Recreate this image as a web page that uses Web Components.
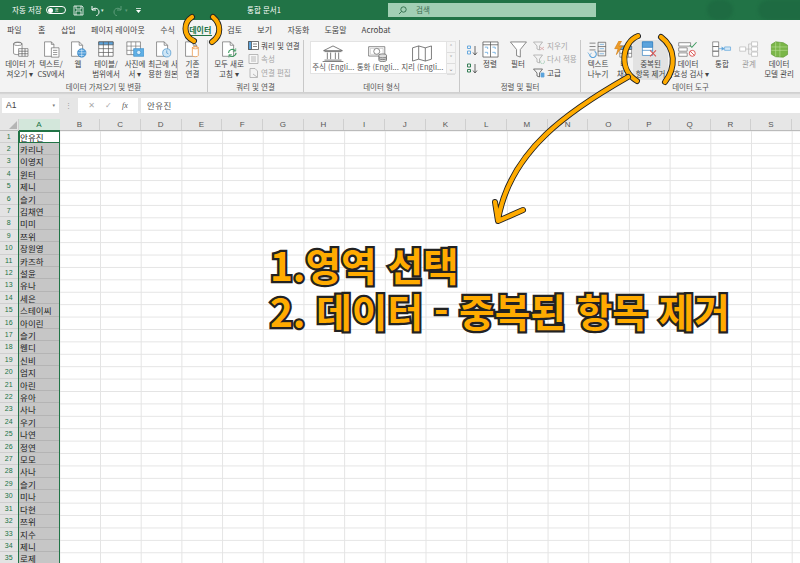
<!DOCTYPE html>
<html lang="ko"><head><meta charset="utf-8"><title>통합 문서1</title>
<style>
html,body{margin:0;padding:0;width:800px;height:563px;overflow:hidden;background:#fff;font-family:"Noto Sans CJK KR","Noto Sans",sans-serif;color:#444}
x-app{display:block;position:relative;width:800px;height:563px;overflow:hidden}
</style></head><body>
<x-app>
  <x-titlebar></x-titlebar>
  <x-tabs></x-tabs>
  <x-ribbon></x-ribbon>
  <x-formula></x-formula>
  <x-sheet></x-sheet>
  <x-notes></x-notes>
</x-app>
<script>
const FONT='"Noto Sans CJK KR","Noto Sans",sans-serif';
const G='#217346',B='#5ba3dc',D='#666',L='#aaa';
const sv=(w,h,b)=>`<svg xmlns="http://www.w3.org/2000/svg" width="${w}" height="${h}" viewBox="0 0 ${w} ${h}" fill="none" stroke="${D}" stroke-width=".8">${b}</svg>`;
const ICONS={
 get:sv(22,20,`<path d="M3 3.500c0-3 10-3 10 0v11c0 2-10 2-10 0z" fill="#fff"/><ellipse cx="8" cy="3.500" rx="5" ry="1.800"/><path d="M9 9h11v9H9z" fill="#fff"/><path d="M9 12h11M9 15h11M13 9v9M16.500 9v9" stroke="#555"/>`),
 csv:sv(22,20,`<path d="M3 1h8l3 3v14H3z" fill="#fff"/><path d="M11 1v3h3"/><path d="M11 8h9v11h-9z" fill="#fff"/><path d="M13 11h5M13 13.500h5M13 16h5"/>`),
 web:sv(22,20,`<path d="M3 1h9l4 4v13H3z" fill="#fff"/><path d="M12 1v4h4"/><circle cx="15" cy="14" r="5" fill="#4a9ad8" stroke="#2f7fc0"/><path d="M10 14h10M15 9v10M12 11h6M12 17h6" stroke="#fff" stroke-width=".6"/>`),
 table:sv(22,20,`<path d="M2 1h17v17H2z" fill="#fff" stroke="#555"/><path d="M2 1h17v3.500H2z" fill="${B}" stroke="#555"/><path d="M2 9h17M2 13.500h17M7.500 1v17M13.500 1v17" stroke="#555"/>`),
 photo:sv(22,20,`<path d="M1 1h16v15H1z" fill="#fff"/><path d="M1 6h16M1 11h16M6 1v15M11.500 1v15" stroke="#777"/><path d="M9 9h12v9H9z" fill="#5fb0e6" stroke="#3f8fc9"/><circle cx="15" cy="13.500" r="2.500" fill="#d7ecfa" stroke="#3f8fc9"/>`),
 recent:sv(22,20,`<path d="M3 1h9l4 4v13H3z" fill="#fff"/><path d="M12 1v4h4"/><circle cx="15" cy="14" r="4.800" fill="#cfe6f6" stroke="#3f8fc9"/><path d="M15 11v3.200l2 1" stroke="#3f8fc9"/>`),
 exist:sv(22,20,`<path d="M3 1h9l4 4v13H3z" fill="#fff"/><path d="M12 1v4h4"/><path d="M11 8c0-2 7-2 7 0v9c0 2-7 2-7 0z" fill="#fff" stroke="#e8872c"/><ellipse cx="14.500" cy="8" rx="3.500" ry="1.200" stroke="#e8872c"/>`),
 refresh:sv(22,20,`<path d="M3 1h9l4 4v13H3z" fill="#fff"/><path d="M12 1v4h4"/><path d="M10 14a4.500 4.500 0 0 1 8-2.500M19 14a4.500 4.500 0 0 1-8 2.500" stroke="#3d9a5f" stroke-width="1.400"/><path d="M18.500 8.500v3.500h-3.500M10.500 19.500V16H14" stroke="#3d9a5f"/>`),
 bank:sv(26,18,`<path d="M13 1 3 6h20zM4 7h18M4 16h18M2 17.500h22" stroke="#555"/><path d="M7 8v7M10.500 8v7M15.500 8v7M19 8v7" stroke="#555"/>`),
 money:sv(26,20,`<path d="M2 2h19v11H2z" fill="#fff" stroke="#555"/><circle cx="11.500" cy="7.500" r="3.500" stroke="#555"/><path d="M4 4h15v7H4z" stroke="#999" stroke-width=".5"/><path d="M14 12c0-2 9-2 9 0v6c0 2-9 2-9 0z" fill="#ddd" stroke="#555"/><path d="M14 14c1 1.500 8 1.500 9 0M14 16c1 1.500 8 1.500 9 0" stroke="#555"/>`),
 map:sv(26,18,`<path d="M3 3l6.500-2 7 2L23 1v14l-6.500 2-7-2L3 17z" fill="#fff" stroke="#555"/><path d="M9.500 1v14M16.500 3v14" stroke="#555"/>`),
 az:sv(12,11,`<path d="M9 1v8.500M7 7.500 9 10l2-2.500" stroke="#444"/><path d="M1.500 1h3v2.500h-3zM1.500 6h3v3h-3z" stroke="${B}" stroke-width=".9"/>`),
 za:sv(12,11,`<path d="M9 1v8.500M7 7.500 9 10l2-2.500" stroke="#444"/><path d="M1.500 1h3v3h-3zM1.500 6.500h3V9h-3z" stroke="${G}" stroke-width=".9"/>`),
 sort:sv(18,18,`<path d="M1 1h16v16H1z" fill="#fff" stroke="#555"/><path d="M1 4h16M9 1v16" stroke="#555"/><path d="M3 6.500h3v2M3 12h3v2M11 6.500h3v2M11 12h3v2" stroke="${B}"/>`),
 filter:sv(20,18,`<path d="M1.500 1h17L12 9v8l-4-1.500V9z" fill="#fff" stroke="#666"/>`),
 split:sv(26,20,`<path d="M3 2.500h7M3 6.500h7M3 10.500h7M13 1.500h9v16h-9z" stroke="#555"/><path d="M13 6.500h9M13 12h9" stroke="#555"/><path d="M15 4h5M15 9h5M15 15h5" stroke="${B}"/><path d="M9 12a4 4 0 1 1-6 4" stroke="${B}" stroke-width="1.300"/><path d="M1 13.500l2 2.800 2.500-2" stroke="${B}"/>`),
 flash:sv(26,20,`<path d="M8 6h14v13H8z" fill="#fff" stroke="#666"/><path d="M8 6h14v4H8z" fill="${B}"/><path d="M8 10h14M8 14.500h14M13 6v13M18 6v13" stroke="#666"/><path d="M7 0 2 9h4l-2 7 7-10H7l3-6z" fill="#ed9c29" stroke="#d67f12"/>`),
 dedupe:sv(26,20,`<path d="M4 1h12v16H4z" fill="#fff" stroke="#2f7fc0"/><path d="M4 1h12v6.500H4z" fill="#5ba3dc" stroke="#2f7fc0"/><path d="M4 11h12" stroke="#2f7fc0"/><path d="M13 11l7 7M20 11l-7 7" stroke="#d9534f" stroke-width="1.200"/>`),
 valid:sv(26,20,`<path d="M2 2h14v4H2zM2 8h10v4H2zM2 14h10v4H2z" fill="#fff" stroke="#666"/><path d="M15 5l2.500 2.500L23 1.500" stroke="#3d9a5f" stroke-width="1.200"/><circle cx="18" cy="14.500" r="3.500" fill="#fff" stroke="#d9534f" stroke-width="1.100"/><path d="M15.500 12l5 5" stroke="#d9534f" stroke-width="1.100"/>`),
 merge:sv(26,20,`<path d="M2 1h7v5.500H2zM2 6.500h7V12H2zM2 12h7v6H2z" fill="#fff" stroke="#666"/><path d="M9 9h6" stroke="${B}"/><path d="M12.500 7l3 2-3 2" fill="${B}" stroke="${B}"/><path d="M16 7h7v4h-7z" fill="#d5e8f6" stroke="${B}"/>`),
 rel:sv(26,20,`<g stroke="#b5b5b5"><path d="M2 7h7v5H2zM16 1h7v5h-7zM16 7h7v5h-7zM16 13h7v5h-7z" fill="#fff"/><path d="M9 9.500h7M12.500 3.500v12h3.500M12.500 3.500H16"/></g>`),
 model:sv(26,20,`<path d="M4 4 9 1l9 1 5 3v11l-5 3-9-.500-5-3z" fill="#7ab648" stroke="#5f9a34"/><path d="M9 1v17M14 2v17M4 7h19M4 11h19" stroke="#bfe09b" stroke-width=".7"/>`),
 q1:sv(11,9,`<path d="M.5.500h10v8H.5z" fill="#fff" stroke="#555"/><path d="M.5.500h3v8h-3z" fill="${B}" stroke="#555"/><path d="M5 3h4M5 5.500h4"/>`),
 q2:sv(11,10,`<path d="M1 .500h9v9H1z" fill="#f7f7f7" stroke="${L}"/><path d="M3 3h5M3 5h5M3 7h5" stroke="${L}"/>`),
 q3:sv(11,10,`<path d="M2 .500h5l2.500 2.500v6.500H2z" stroke="${L}"/><path d="M5 6l4 3" stroke="${L}"/>`),
 f1:sv(12,10,`<path d="M.500 1h9L6.500 5v4L4 8V5z" stroke="${L}"/><path d="M7 6l4 3M11 6 7 9" stroke="#d9a5a5"/>`),
 f2:sv(12,10,`<path d="M.500 1h9L6.500 5v4L4 8V5z" stroke="${L}"/><path d="M8 6.500a2 2 0 1 0 3 0" stroke="#a8cfb8"/>`),
 f3:sv(12,10,`<path d="M.500 1h9L6.500 5v4L4 8V5z" stroke="#555"/><path d="M8 5h3v4H8z" fill="${B}" stroke="${B}"/>`)
};
function def(name,css,html,init){
  customElements.define(name,class extends HTMLElement{
    connectedCallback(){ if(this.shadowRoot) return;
      const s=this.attachShadow({mode:'open'});
      s.innerHTML=`<style>${css}</style>`+(typeof html==='function'?html(this):html);
      init&&init(s,this);
    }
  });
}
def('x-rb',`:host{display:flex;flex-direction:column;align-items:center;flex:none;box-sizing:border-box;height:40px;padding-top:1px;font:7.500px/10px ${FONT};color:#444;text-align:center;white-space:nowrap}
:host([dim]){color:#9a9a9a}
:host([hot]){background:#e2e2e2}
.i{height:17px;display:flex;align-items:flex-start;justify-content:center}
svg{display:block;height:17px;width:auto}.t{margin-top:1px}`,
 h=>`<div class="i">${ICONS[h.getAttribute('icon')]||''}</div><div class="t"><slot></slot></div>`);
def('x-rs',`:host{display:flex;align-items:center;gap:2px;height:11px;font:7.500px/10px ${FONT};color:#444;white-space:nowrap}
:host([dim]){color:#a5a5a5}svg{display:block}`,
 h=>`${ICONS[h.getAttribute('icon')]||''}<slot></slot>`);
def('x-group',`:host{display:flex;flex-direction:column;flex:none;box-sizing:border-box;height:52px;border-right:1px solid #c8c8c8;position:relative}
.b{display:flex;height:38px;box-sizing:border-box;flex:none}
.l{flex:none;height:14px;margin-top:2px;font:7.500px/14px ${FONT};color:#555;text-align:center;white-space:nowrap}`,
 h=>`<div class="b"><slot></slot></div><div class="l">${h.getAttribute('label')}</div>`);
def('x-stack',`:host{display:flex;flex-direction:column;flex:none;gap:2.500px;box-sizing:border-box}`,`<slot></slot>`);
def('x-gallery',`:host{display:flex;flex:none;height:33px;margin-top:1px;background:#fff;border:1px solid #e3e3e3;box-sizing:border-box}
.it{display:flex;flex-direction:column;align-items:center;width:44.500px;padding-top:3px;box-sizing:border-box;font:7.500px/10px ${FONT};color:#555;white-space:nowrap}
.it svg{display:block;height:17px}
.sc{display:flex;flex-direction:column;width:8px;margin-left:auto;border-left:1px solid #e3e3e3;background:#f5f5f5}
.sc i{flex:1;border-bottom:1px solid #ddd;font:normal 6px/10px "DejaVu Sans";color:#888;text-align:center}`,
 `<div class="it">${ICONS.bank}<span>주식 (Engli...</span></div><div class="it">${ICONS.money}<span>통화 (Engli...</span></div><div class="it">${ICONS.map}<span>지리 (Engli...</span></div><div class="sc"><i>˄</i><i>˅</i><i>⌄</i></div>`);
def('x-titlebar',`:host{display:flex;align-items:center;height:20px;background:${G};color:#fff;font:7.500px/14px ${FONT};position:relative;overflow:hidden}
.left{display:flex;align-items:center;width:388px;flex:none;box-sizing:border-box;padding-left:12px}
.tg{width:20px;height:8px;border:1px solid #fff;border-radius:5px;margin-left:4px;box-sizing:border-box;display:flex;align-items:center;padding-left:1px;font-size:4px;gap:2px}
.tg b{width:5px;height:5px;border-radius:50%;background:#fff}
svg{display:block;flex:none}
.doc{position:absolute;left:247px;top:3px}
.s{display:flex;align-items:center;width:208px;height:14px;background:#a2cfb4;color:#3c6b50;box-sizing:border-box;padding-left:10px;gap:9px;flex:none}
.b1,.b2{height:20px;background:#1e6b42;filter:blur(1.500px);flex:none}
.b1{margin-left:111px;width:26px;border-radius:10px}
.b2{margin-left:25px;width:48px;border-radius:10px 0 0 10px}`,
 `<div class="left"><span>자동 저장</span><span class="tg"><b></b><span>끔</span></span>
 <svg style="margin-left:7px" width="11" height="11" viewBox="0 0 11 11" fill="none" stroke="#fff" stroke-width=".8"><path d="M1 1h8l1 1v8H1zM3 1v3h5V1M3 10V6h5v4"/></svg>
 <svg style="margin-left:5px" width="11" height="11" viewBox="0 0 11 11" fill="none" stroke="#fff" stroke-width="1"><path d="M3 1v4h4M3 5c2-3 7-2 7 2 0 2-1 3-3 4"/></svg>
 <span style="margin-left:1px;font-size:5px;color:#dcefe4">▾</span>
 <svg style="margin-left:9px" width="11" height="11" viewBox="0 0 11 11" fill="none" stroke="#5f9d7b" stroke-width="1"><path d="M8 1v4H4M8 5c-2-3-7-2-7 2 0 2 1 3 3 4"/></svg>
 <span style="margin-left:1px;font-size:5px;color:#5f9d7b">▾</span>
 <svg style="margin-left:7px" width="7" height="7" viewBox="0 0 7 7" fill="#fff" stroke="none"><path d="M1 1h5v.8H1zM1 3h5L3.500 6z"/></svg></div>
 <span class="doc">통합 문서1</span>
 <div class="s"><svg width="9" height="9" viewBox="0 0 9 9" fill="none" stroke="#2e6a48" stroke-width=".9"><circle cx="5.500" cy="3.500" r="2.700"/><path d="M3.500 5.500 1 8"/></svg><span>검색</span></div>
 <div class="b1"></div><div class="b2"></div>`);
def('x-tabs',`:host{display:flex;height:20px;background:#f3f3f3;font:8px/19px ${FONT};color:#444;box-sizing:border-box;padding-left:7px;white-space:nowrap}
span{flex:none;display:block}.a{color:${G};font-weight:700;position:relative}
.a:after{content:"";position:absolute;left:-1px;right:-1px;bottom:4px;height:1.500px;background:${G}}`,
 [['파일',0],['홈',16.300],['삽입',15.600],['페이지 레이아웃',15.300],['수식',15.400],['데이터',14.300],['검토',16],['보기',15.300],['자동화',15.300],['도움말',15],['Acrobat',15]]
 .map(t=>`<span ${t[0]==='데이터'?'class="a"':''} style="margin-left:${t[1]}px">${t[0]}</span>`).join(''));
def('x-ribbon',`:host{display:flex;height:53px;background:#f3f3f3;border-bottom:1px solid #d0d0d0;box-shadow:0 1px 1px #d5d5d5;box-sizing:border-box;position:relative}`,
 `<x-group label="데이터 가져오기 및 변환" style="width:208px"><x-rb icon="get" style="width:36px;margin-left:2px">데이터 가<br>져오기 ▾</x-rb><x-rb icon="csv" style="width:26px">텍스트/<br>CSV에서</x-rb><x-rb icon="web" style="width:28px">웹</x-rb><x-rb icon="table" style="width:28px">테이블/<br>범위에서</x-rb><x-rb icon="photo" style="width:30px">사진에<br>서 ▾</x-rb><x-rb icon="recent" style="width:26px;margin-right:1px">최근에 사<br>용한 원본</x-rb><x-rb icon="exist" style="width:30px;border-left:1px solid #c8c8c8">기존<br>연결</x-rb></x-group>
 <x-group label="쿼리 및 연결" style="width:96px"><x-rb icon="refresh" style="width:38px;margin-left:2px">모두 새로<br>고침 ▾</x-rb><x-stack><x-rs icon="q1">쿼리 및 연결</x-rs><x-rs icon="q2" dim>속성</x-rs><x-rs icon="q3" dim>연결 편집</x-rs></x-stack></x-group>
 <x-group label="데이터 형식" style="width:156px"><x-gallery style="width:146px;margin-left:6px"></x-gallery></x-group>
 <x-group label="정렬 및 필터" style="width:121px"><x-stack style="padding:4.500px 0 0 6px;gap:7px"><x-rs icon="az"></x-rs><x-rs icon="za"></x-rs></x-stack><x-rb icon="sort" style="width:22px;margin-left:1px">정렬</x-rb><x-rb icon="filter" style="width:28px;margin-left:3px">필터</x-rb><x-stack style="margin-left:1px"><x-rs icon="f1" dim>지우기</x-rs><x-rs icon="f2" dim>다시 적용</x-rs><x-rs icon="f3">고급</x-rs></x-stack></x-group>
 <x-group label="데이터 도구" style="width:219px;border-right:0"><x-rb icon="split" style="width:32px;margin-left:1px">텍스트<br>나누기</x-rb><x-rb icon="flash" style="width:20px">빠<br>채우</x-rb><x-rb icon="dedupe" hot style="width:35px;margin-left:-1px">중복된<br>항목 제거</x-rb><x-rb icon="valid" style="width:38px;margin-left:1px">데이터<br>유효성 검사 ▾</x-rb><x-rb icon="merge" style="width:30px">통합</x-rb><x-rb icon="rel" dim style="width:24px">관계</x-rb><x-rb icon="model" style="width:34px;margin-left:1px">데이터<br>모델 관리</x-rb></x-group>`);
def('x-formula',`:host{display:flex;height:26px;background:#e6e6e6;box-sizing:border-box;padding:5px 0 6px 2px;font:8.500px/15px ${FONT};color:#444}
.n{width:57px;background:#fff;box-sizing:border-box;padding:0 4px;display:flex;justify-content:space-between;font-family:"Liberation Sans",sans-serif;font-size:8.500px}
.n i{font:normal 5px/15px "DejaVu Sans";color:#777}
.d{width:19px;text-align:center;color:#999;font-size:7px}
.f{width:60px;background:#fff;display:flex;align-items:center;justify-content:space-around;box-sizing:border-box;padding:0 5px;color:#aaa;font:8px/15px "DejaVu Sans"}
.f em{color:#555;font:italic 8px/15px "Liberation Serif"}
.v{flex:1;background:#fff;margin-left:3px;padding-left:6px;letter-spacing:.4px;color:#555}`,
 `<div class="n"><span>A1</span><i>▾</i></div><div class="d">⋮</div><div class="f"><span>✕</span><span>✓</span><em>fx</em></div><div class="v">안유진</div>`);
const names=['안유진','카리나','이영지','윈터','제니','슬기','김채연','미미','쯔위','장원영','카즈하','설윤','유나','세은','스테이씨','아이린','슬기','웬디','신비','엄지','아린','유아','사나','우기','나연','정연','모모','사나','슬기','미나','다현','쯔위','지수','제니','로제'];
const COLS='BCDEFGHIJKLMNOPQRS'.split('');
def('x-sheet',`:host{display:grid;grid-template-columns:18.500px 41px 1fr;grid-template-rows:11.500px 1fr;height:444px;overflow:hidden;font:8.500px/12.420px ${FONT};background:#fff}
.c{background:#e6e6e6;border-right:1px solid #cfcfcf;border-bottom:1px solid #bbb;position:relative;box-sizing:border-box;overflow:hidden}
.c:after{content:"";position:absolute;right:1px;bottom:1px;border:4px solid transparent;border-right-color:#b5b5b5;border-bottom-color:#b5b5b5}
.ah{background:#d3e7db;color:${G};border-bottom:1.500px solid ${G};text-align:center;font:8px/11px "Liberation Sans",sans-serif}
.hs{display:flex;background:#e6e6e6;border-bottom:1px solid #bbb;box-sizing:border-box;font:8px/11px "Liberation Sans",sans-serif;color:#555;overflow:hidden}
.hs b{flex:0 0 40.700px;font-weight:400;text-align:center;border-right:1px solid #cfcfcf;box-sizing:border-box}
.nums{background:#e3e3e3;font:7px/12.420px "Liberation Sans",sans-serif;color:${G};text-align:center;border-right:1px solid ${G};box-sizing:border-box;overflow:hidden}
.nums div{height:12.420px;box-sizing:border-box;border-bottom:1px solid #cfcfcf}
.a{background:#c6c6c6;color:#222;border-right:1.500px solid ${G};box-sizing:border-box;position:relative;overflow:hidden}
.a div{height:12.420px;box-sizing:border-box;padding-left:1.500px;border-bottom:1px solid #b4b4b4;white-space:nowrap;letter-spacing:.1px}
.a div:first-child{background:#fff;border:1.500px solid ${G};border-right:0;line-height:10px;padding-left:.5px}
.r{background-color:#fff;background-image:linear-gradient(to right,#e4e4e4 1px,transparent 1px),linear-gradient(to bottom,#e4e4e4 1px,transparent 1px);background-size:40.700px 100%,100% 12.420px;background-position:40px 0,0 11.900px}`,
 `<div class="c"></div><div class="ah">A</div><div class="hs">${COLS.map(c=>`<b>${c}</b>`).join('')}</div>
 <div class="nums">${names.map((_,i)=>`<div>${i+1}</div>`).join('')}</div>
 <div class="a">${names.map(n=>`<div>${n}</div>`).join('')}</div><div class="r"></div>`);
const stroke=(d)=>`<path d="${d}" stroke="#222" stroke-width="6"/><path d="${d}" stroke="#ffab00" stroke-width="4.200"/>`;
def('x-notes',`:host{position:absolute;left:0;top:0;width:800px;height:563px;pointer-events:none;display:block}
svg{position:absolute;left:0;top:0}
.t{position:absolute;left:270px;top:242px;font:700 38.700px/45.500px ${FONT};color:#ffab00;-webkit-text-stroke:4.500px #222;paint-order:stroke fill;white-space:pre}`,
 `<svg width="800" height="563" viewBox="0 0 800 563" fill="none" stroke-linecap="round" stroke-linejoin="round">
 ${stroke('M192 17C184 22 182 35 194 41')}${stroke('M213 17C221 24 222 35 212 42')}
 ${stroke('M638 36C622 42 618 70 637 81')}${stroke('M661 37C676 48 676 68 665 82')}
 ${stroke('M628 77C570 110 510 150 498 220M495 202L498 221L523 210')}
 </svg><div class="t">1.영역 선택
2. 데이터 - 중복된 항목 제거</div>`);
customElements.define('x-app',class extends HTMLElement{constructor(){super();this.attachShadow({mode:'open'}).innerHTML='<style>:host{display:block;position:relative;width:800px;height:563px;overflow:hidden}</style><slot></slot>';}});
</script>
</body></html>
